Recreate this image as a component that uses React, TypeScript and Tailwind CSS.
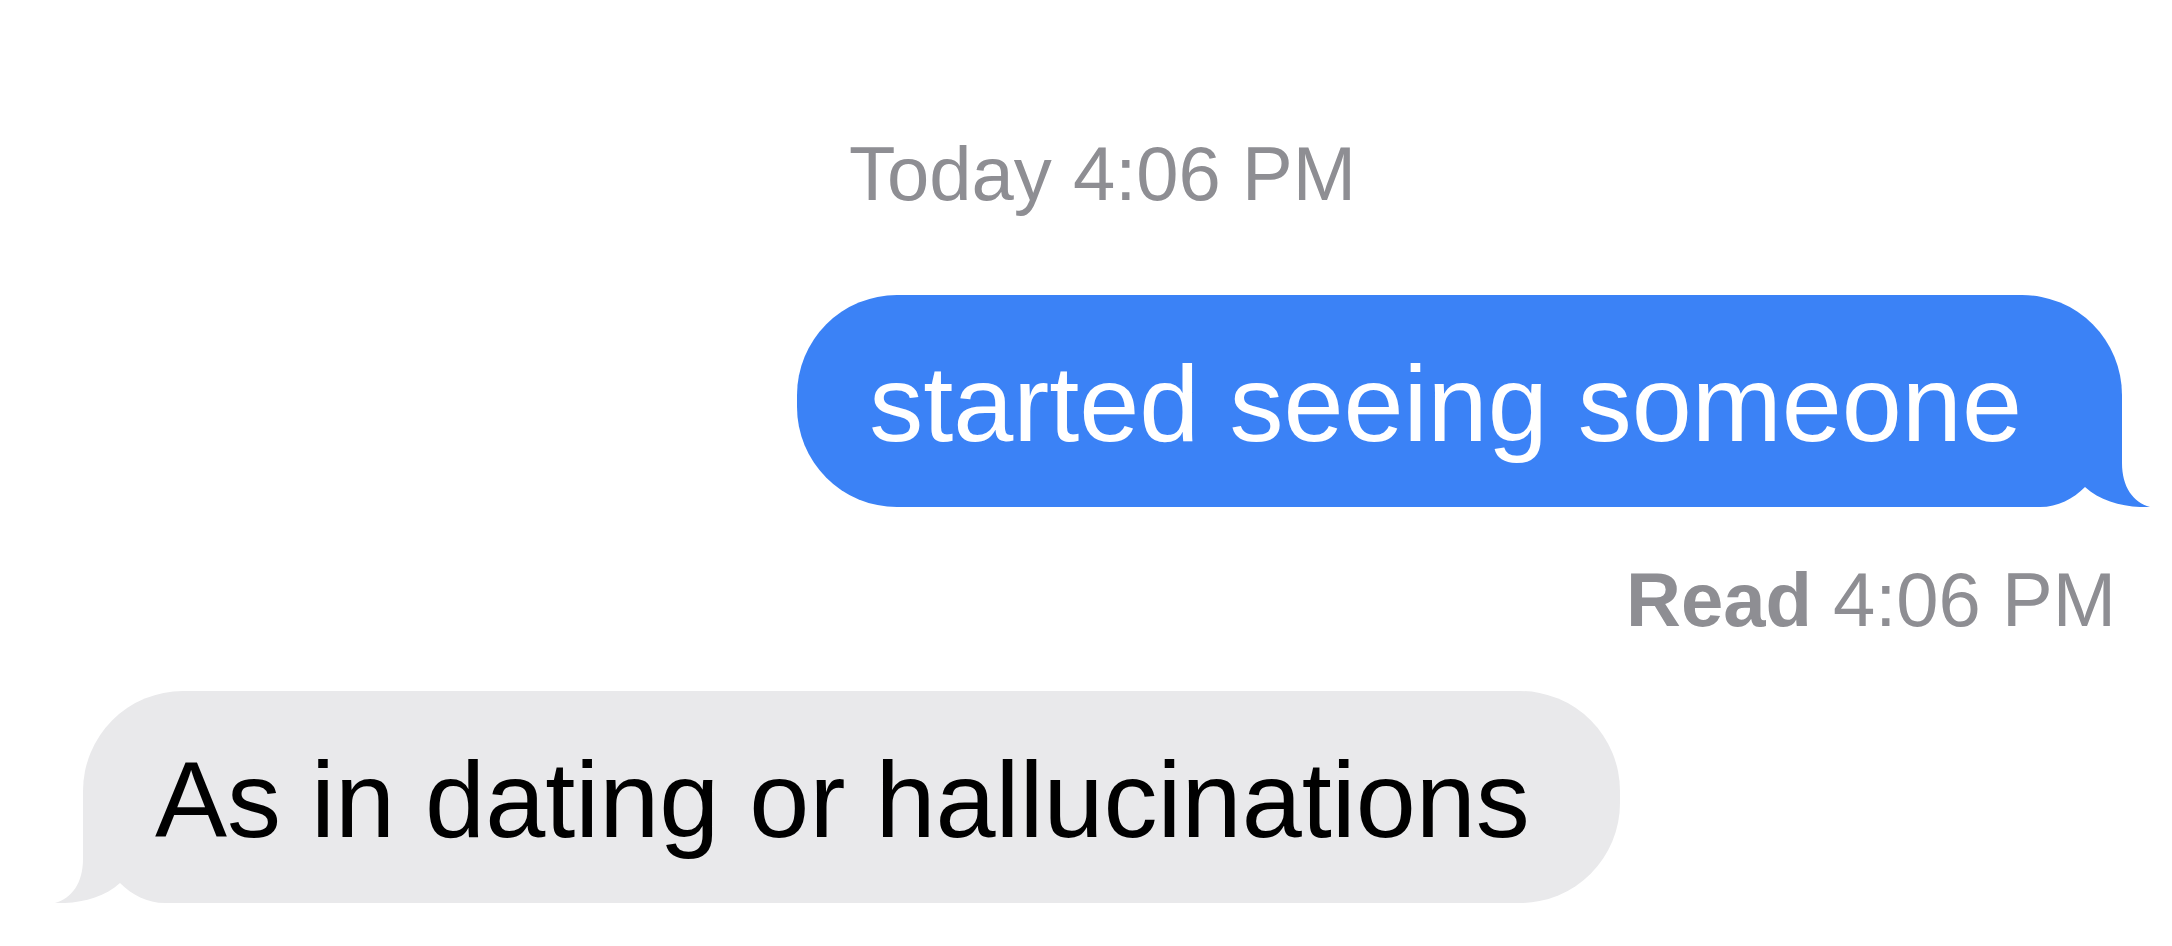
import React from "react";

const font = { fontFamily: '"Liberation Sans", Arial, sans-serif' };

// bubble tail, drawn for the right side; mirrored for the left one
const Tail = ({ color, side }: { color: string; side: "left" | "right" }) => (
  <svg
    viewBox="0 0 160 110"
    className={
      side === "right"
        ? "absolute bottom-0 -right-[33px] w-[160px] h-[110px]"
        : "absolute bottom-0 -left-[33px] w-[160px] h-[110px] -scale-x-100"
    }
  >
    <path
      d="M0 0 H127 V66 C127 90 138 105 155 110 C132 111 106 105 90 90 C78 102 63 110 45 110 H0 Z"
      fill={color}
    />
  </svg>
);

const App: React.FC = () => {
  return (
    <div
      className="w-[2172px] h-[946px] bg-white overflow-hidden pl-[83px] pr-[50px] pt-[136px]"
      style={font}
    >
      {/* timestamp */}
      <div className="text-center text-[76px] leading-none text-[#8e8e93]">
        Today 4:06 PM
      </div>

      {/* outgoing */}
      <div className="flex justify-end mt-[83px]">
        <div className="relative bg-[#3b82f6] rounded-[100px] pl-[72px] pr-[100px] pt-[55px] pb-[49px]">
          <span className="relative z-10 text-[108px] leading-none text-white whitespace-nowrap">
            started seeing someone
          </span>
          <Tail color="#3b82f6" side="right" />
        </div>
      </div>

      <div className="flex justify-end mt-[55px] mr-[6px] text-[76px] leading-none text-[#8e8e93] whitespace-nowrap">
        <span className="font-bold">Read</span>&nbsp;4:06 PM
      </div>

      {/* incoming */}
      <div className="flex justify-start mt-[53px]">
        <div className="relative bg-[#e9e9eb] rounded-[100px] pl-[72px] pr-[90px] pt-[55px] pb-[49px]">
          <span className="relative z-10 text-[108px] leading-none text-black whitespace-nowrap">
            As in dating or hallucinations
          </span>
          <Tail color="#e9e9eb" side="left" />
        </div>
      </div>
    </div>
  );
};

export default App;
